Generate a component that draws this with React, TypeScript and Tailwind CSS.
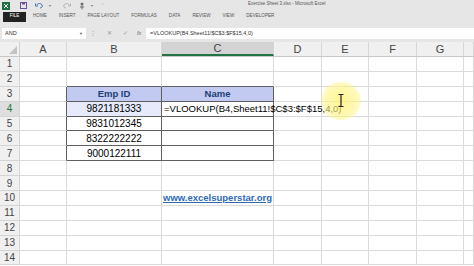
import React from 'react';

const colWidths = ['w-[47px]', 'w-[95px]', 'w-[112px]', 'w-[48px]', 'w-[47px]', 'w-[48px]', 'w-[47px]', 'w-[10px]'];
const colLetters = ['A', 'B', 'C', 'D', 'E', 'F', 'G', ''];

const empIds: Record<number, string> = {
  4: '9821181333',
  5: '9831012345',
  6: '8322222222',
  7: '9000122111',
};

const tabs = ['HOME', 'INSERT', 'PAGE LAYOUT', 'FORMULAS', 'DATA', 'REVIEW', 'VIEW', 'DEVELOPER'];

// border colour of a cell, depends on whether it touches the Emp ID / Name table
const cellBorder = (row: number, col: number) => {
  const inTable = row >= 3 && row <= 7 && (col === 1 || col === 2);
  const aboveTable = row === 2 && (col === 1 || col === 2);
  const leftOfTable = row >= 3 && row <= 7 && col === 0;
  if (inTable) return 'border-r border-b border-[#5f5f5f]';
  if (aboveTable) return 'border-r border-b border-r-[#dadada] border-b-[#5f5f5f]';
  if (leftOfTable) return 'border-r border-b border-r-[#5f5f5f] border-b-[#dadada]';
  return 'border-r border-b border-[#dadada]';
};

const QuickAccess = () => (
  <div className="flex items-center h-full pl-[2px] gap-[5px]">
    <svg width="8" height="8" viewBox="0 0 8 8">
      <rect width="8" height="8" fill="#1e7145" />
      <path d="M2 2l4 4M6 2l-4 4" stroke="#fff" strokeWidth="1" />
    </svg>
    <svg width="7" height="7" viewBox="0 0 7 7" className="ml-[5px]">
      <rect x="0.5" y="0.5" width="6" height="6" fill="none" stroke="#6b4e9b" strokeWidth="1" />
      <rect x="2" y="0.5" width="3" height="2" fill="#6b4e9b" />
    </svg>
    <svg width="9" height="7" viewBox="0 0 9 7" className="ml-[3px]">
      <path d="M2 3c1-2 4-2 5 0s-1 3-2 3" fill="none" stroke="#3b6fb6" strokeWidth="1" />
      <path d="M0.5 1.5v2.5h2.5" fill="none" stroke="#3b6fb6" strokeWidth="1" />
    </svg>
    <span className="text-[4px] text-[#777]">▾</span>
    <svg width="9" height="7" viewBox="0 0 9 7" className="ml-[6px]">
      <path d="M7 3c-1-2-4-2-5 0s1 3 2 3" fill="none" stroke="#b0b0b0" strokeWidth="1" />
      <path d="M8.5 1.5v2.5h-2.5" fill="none" stroke="#b0b0b0" strokeWidth="1" />
    </svg>
    <svg width="7" height="8" viewBox="0 0 7 8" className="ml-[3px]">
      <circle cx="3" cy="2" r="1.5" fill="#6d6d6d" />
      <path d="M3 3.5v4M1 5h4" stroke="#6d6d6d" strokeWidth="1" />
    </svg>
    <span className="text-[4px] text-[#777]">▾</span>
    <span className="text-[5px] text-[#888] ml-[4px]">⁼</span>
  </div>
);

export default function App() {
  const rows = Array.from({ length: 14 }, (_, i) => i + 1);

  return (
    <div className="w-[474px] h-[266px] overflow-hidden bg-white relative font-['Liberation_Sans',Arial,sans-serif] text-black">
      {/* Title bar + ribbon tabs + formula bar */}
      <div className="bg-[#e6e6e6] h-[42px] flex flex-col">
        <div className="h-[11px] flex items-center relative">
          <QuickAccess />
          <span className="absolute left-[248px] top-[2px] text-[4.5px] leading-none text-[#555]">
            Exercise Sheet 3.xlsx - Microsoft Excel
          </span>
        </div>
        <div className="h-[11px] flex items-center text-[4.6px] text-[#555]">
          <div className="ml-[3px] h-[10px] w-[23px] bg-[#222] text-white flex items-center justify-center">
            FILE
          </div>
          <div className="flex items-center gap-[12px] ml-[7px]">
            {tabs.map((t) => (
              <span key={t}>{t}</span>
            ))}
          </div>
        </div>
        <div className="h-[6px]" />
        <div className="h-[11px] flex items-center">
          <div className="ml-[2px] w-[84px] h-full bg-white flex items-center justify-between px-[3px] text-[5.5px] text-[#333]">
            <span>AND</span>
            <span className="text-[4px] text-[#666]">▼</span>
          </div>
          <div className="w-[60px] flex items-center text-[5.5px] text-[#999]">
            <span className="ml-[4px]">⋮</span>
            <span className="ml-[11px]">✕</span>
            <span className="ml-[11px]">✓</span>
            <span className="ml-[9px] italic text-[#666]">fx</span>
          </div>
          <div className="flex-1 h-full bg-white flex items-center pl-[4px] text-[5.5px] text-[#333]">
            =VLOOKUP(B4,Sheet11!$C$3:$F$15,4,0)
          </div>
        </div>
      </div>

      {/* Column headers */}
      <div className="h-[15px] flex bg-[#f0f0f0] border-b border-[#c8c8c8]">
        <div className="w-[20px] border-r border-[#d0d0d0] flex items-end justify-end p-[2px]">
          <svg width="8" height="8" viewBox="0 0 8 8">
            <path d="M8 0v8H0z" fill="#c4c4c4" />
          </svg>
        </div>
        {colLetters.map((l, i) => (
          <div
            key={i}
            className={`${colWidths[i]} flex items-center justify-center text-[11px] text-[#444] border-r border-[#d7d7d7] ${
              i === 2 ? 'bg-[#d3d3d3] border-b-2 border-b-[#217346]' : ''
            }`}
          >
            {l}
          </div>
        ))}
      </div>

      {/* Sheet rows */}
      {rows.map((r) => (
        <div key={r} className="h-[14.9px] flex">
          <div
            className={`w-[20px] flex items-center justify-center text-[10px] border-r border-b border-[#d4d4d4] ${
              r === 4 ? 'bg-[#dedede] text-[#217346]' : 'bg-[#f0f0f0] text-[#444]'
            }`}
          >
            {r}
          </div>
          {colWidths.map((w, c) => {
            let content: React.ReactNode = null;
            let fill = '';
            if (r === 3 && c === 1) {
              fill = 'bg-[#c2caf2]';
              content = <span className="font-bold text-[9.5px] text-[#213f74]">Emp ID</span>;
            } else if (r === 3 && c === 2) {
              fill = 'bg-[#c2caf2]';
              content = <span className="font-bold text-[9.5px] text-[#213f74]">Name</span>;
            } else if (c === 1 && empIds[r]) {
              if (r === 4) fill = 'bg-[#e6eafb]';
              content = <span className="text-[10px]">{empIds[r]}</span>;
            }
            const overflowText =
              r === 4 && c === 2 ? (
                <span className="absolute left-[2px] top-0 h-full flex items-center whitespace-nowrap text-[9.5px] z-10">
                  =VLOOKUP(B4,Sheet11!$C$3:$F$15,4,0)
                </span>
              ) : r === 10 && c === 2 ? (
                <span className="absolute left-[1px] top-0 h-full flex items-center whitespace-nowrap text-[9.5px] font-bold text-[#2f6ab7] underline z-10">
                  www.excelsuperstar.org
                </span>
              ) : null;
            return (
              <div
                key={c}
                className={`${w} relative flex items-center justify-center ${cellBorder(r, c)} ${fill}`}
              >
                {content}
                {overflowText}
              </div>
            );
          })}
        </div>
      ))}

      {/* Cursor highlight */}
      <div className="absolute left-[321px] top-[82px] w-[40px] h-[38px] rounded-full bg-[radial-gradient(circle,rgba(255,242,110,0.75)_0%,rgba(255,244,130,0.6)_55%,rgba(255,248,170,0)_100%)] z-20 pointer-events-none" />
      <svg className="absolute left-[338px] top-[94px] z-30" width="6" height="13" viewBox="0 0 6 13">
        <path d="M0.5 0.5h5M3 0.5v12M0.5 12.5h5" stroke="#222" strokeWidth="1.2" fill="none" />
      </svg>
    </div>
  );
}
